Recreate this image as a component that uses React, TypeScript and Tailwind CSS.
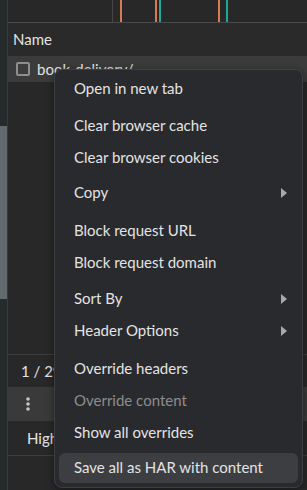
import React from "react";

type Item = { label: string; sub?: boolean; disabled?: boolean; active?: boolean } | { sep: number };

const items: Item[] = [
  { label: "Open in new tab" },
  { sep: 5 },
  { label: "Clear browser cache" },
  { label: "Clear browser cookies" },
  { sep: 3 },
  { label: "Copy", sub: true },
  { sep: 6 },
  { label: "Block request URL" },
  { label: "Block request domain" },
  { sep: 4 },
  { label: "Sort By", sub: true },
  { label: "Header Options", sub: true },
  { sep: 6 },
  { label: "Override headers" },
  { label: "Override content", disabled: true },
  { label: "Show all overrides" },
  { sep: 3 },
  { label: "Save all as HAR with content", active: true },
];

function Arrow() {
  return (
    <svg width="6" height="10" viewBox="0 0 6 10" className="shrink-0">
      <path d="M0 0 L6 5 L0 10 Z" fill="#a9a9a9" />
    </svg>
  );
}

export default function App() {
  return (
    <div
      className="relative w-[307px] h-[490px] overflow-hidden flex bg-[#282828] text-[#e3e3e3]"
      style={{ fontFamily: "Lato, 'Noto Sans', sans-serif" }}
    >
      {/* left strip with scrollbar */}
      <div className="w-[7px] shrink-0 flex flex-col bg-[#252a2a]">
        <div className="h-[126px]" />
        <div className="h-[173px] bg-[#626a70]" />
      </div>
      <div className="w-px shrink-0 bg-[#363b3b]" />

      {/* main panel */}
      <div className="flex-1 flex flex-col min-w-0">
        {/* overview */}
        <div className="h-[22px] shrink-0 bg-[#282828]">
          <svg width="299" height="22" className="block">
            <rect x="104" y="0" width="1" height="22" fill="#454545" />
            <rect x="112" y="0" width="2" height="22" fill="#d67b52" />
            <rect x="147" y="0" width="2" height="22" fill="#d67b52" />
            <rect x="151" y="0" width="2" height="22" fill="#1fa899" />
            <rect x="210" y="0" width="2" height="22" fill="#d67b52" />
            <rect x="218" y="0" width="2" height="22" fill="#1fa899" />
          </svg>
        </div>
        <div className="h-px shrink-0 bg-[#4a4a4a]" />
        {/* header */}
        <div className="h-[33px] shrink-0 flex items-center pl-[5px] text-[15px] bg-[#2a2a2a]">
          Name
        </div>
        {/* selected row */}
        <div className="h-[26px] shrink-0 flex items-center bg-[#3b3b3b] text-[15px]">
          <div className="ml-[8px] w-[14px] h-[14px] rounded-[2px] border-2 border-[#8e8e8e]" />
          <span className="ml-[7px]">book-delivery/</span>
        </div>
        <div className="flex-1" />
        <div className="h-px shrink-0 bg-[#3d3d3d]" />
        {/* status */}
        <div className="h-[32px] shrink-0 flex items-center pl-[13px] text-[15px] whitespace-nowrap">
          <span className="w-[33px] overflow-hidden">1 / 29 requests</span>
        </div>
        {/* toolbar */}
        <div className="h-[34px] shrink-0 flex items-center pl-[17px] bg-[#3a3a3a]">
          <svg width="6" height="14" viewBox="0 0 6 14">
            <circle cx="3" cy="2" r="1.8" fill="#c7c7c7" />
            <circle cx="3" cy="7" r="1.8" fill="#c7c7c7" />
            <circle cx="3" cy="12" r="1.8" fill="#c7c7c7" />
          </svg>
        </div>
        <div className="h-[34px] shrink-0 flex items-center pl-[19px] text-[15px] whitespace-nowrap">
          <span className="w-[27px] overflow-hidden">Highlight</span>
        </div>
        <div className="h-px shrink-0 bg-[#3d3d3d]" />
        <div className="h-[34px] shrink-0" />
      </div>

      {/* context menu */}
      <div className="absolute left-[54px] top-[69px] w-[249px] rounded-[8px] border border-[#3e3f42] bg-[#292a2d] py-[3px] shadow-[0_2px_8px_rgba(0,0,0,0.45)]">
        {items.map((it, i) =>
          "sep" in it ? (
            <div key={i} style={{ height: it.sep }} />
          ) : (
            <div key={i} className="h-[32px] py-[1px] px-[4px]">
              <div
                className={
                  "h-[30px] flex items-center justify-between pl-[15px] pr-[11px] pb-[1px] rounded-[6px] text-[15px] whitespace-nowrap " +
                  (it.active ? "bg-[#3d3e42] " : "") +
                  (it.disabled ? "text-[#8d8d8d]" : "text-[#e3e3e3]")
                }
              >
                <span>{it.label}</span>
                {it.sub ? <Arrow /> : null}
              </div>
            </div>
          )
        )}
      </div>
    </div>
  );
}
